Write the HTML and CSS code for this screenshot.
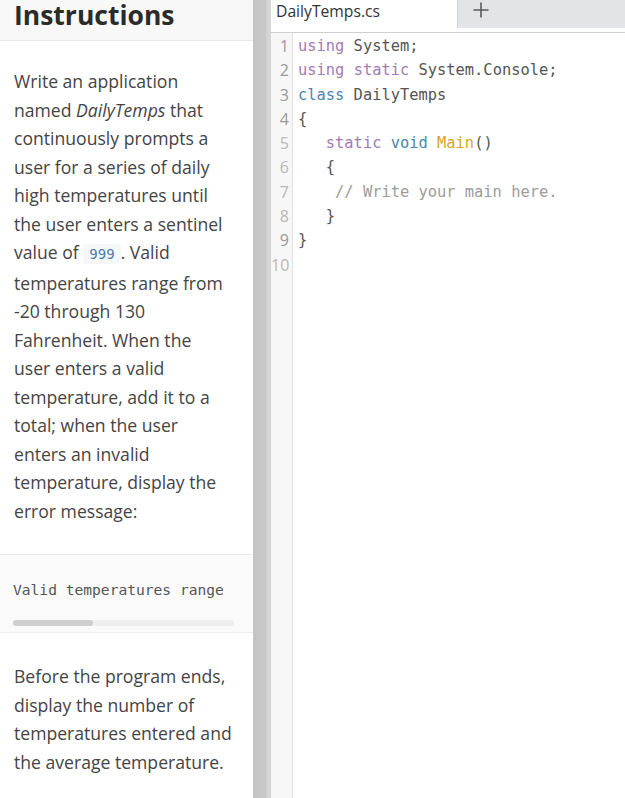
FILE: index.html
```html
<!DOCTYPE html>
<html>
<head>
<meta charset="utf-8">
<link rel="stylesheet" href="styles.css">
</head>
<body>
<div class="app">
  <aside class="instructions">
    <header class="ins-head"><h1>Instructions</h1></header>
    <div class="ins-body">
      <p>Write an application named <em>DailyTemps</em> that continuously prompts a user for a series of daily high temperatures until the user enters a sentinel value of <code class="inline">999</code>. Valid temperatures range from -20 through 130 Fahrenheit. When the <span class="nw">user enters</span> a valid temperature, add it to a total; when the user enters an invalid temperature, display the error message:</p>
      <div class="codeblock">
        <pre>Valid temperatures range</pre>
        <div class="hscroll"><div class="thumb"></div></div>
      </div>
      <p class="after">Before the program ends, display the number of temperatures entered and the average temperature.</p>
    </div>
  </aside>
  <div class="splitter"></div>
  <main class="editor">
    <div class="tabbar">
      <div class="tab">DailyTemps.cs</div>
      <div class="tab-add">
        <svg width="16" height="16" viewBox="0 0 16 16"><path d="M8 0.5V15.5M0.5 8H15.5" stroke="#5a5a5a" stroke-width="1.6" fill="none"/></svg>
      </div>
    </div>
    <div class="code">
      <div class="gutter">
        <div class="ln">1</div><div class="ln">2</div><div class="ln">3</div><div class="ln">4</div>
        <div class="ln lt">5</div><div class="ln lt">6</div><div class="ln lt">7</div><div class="ln lt">8</div>
        <div class="ln">9</div><div class="ln lt">10</div>
      </div>
      <div class="lines">
        <div class="line"><span class="kw">using</span> System;</div>
        <div class="line"><span class="kw">using</span> <span class="kw">static</span> System.Console;</div>
        <div class="line"><span class="ty">class</span> DailyTemps</div>
        <div class="line">{</div>
        <div class="line">   <span class="kw">static</span> <span class="ty">void</span> <span class="fn">Main</span>()</div>
        <div class="line">   {</div>
        <div class="line">    <span class="cm">// Write your main here.</span></div>
        <div class="line">   }</div>
        <div class="line">}</div>
        <div class="line"> </div>
      </div>
    </div>
  </main>
</div>
</body>
</html>
```

FILE: styles.css
```css
html, body {
  margin: 0;
  padding: 0;
  height: 100%;
  background: #fff;
}
.app {
  display: flex;
  height: 798px;
  overflow: hidden;
}
.instructions {
  width: 253px;
  flex: none;
  font-family: "Open Sans", sans-serif;
  color: #444;
  overflow: hidden;
}
.ins-head {
  height: 41px;
  box-sizing: border-box;
  background: #f8f8f8;
  border-bottom: 1px solid #e8e8e8;
  padding: 0 14px;
}
.ins-head h1 {
  margin: 0;
  font-size: 26.5px;
  font-weight: 700;
  color: #2b2b2b;
  line-height: 31px;
}
.ins-body p {
  margin: 0;
  padding: 26px 19px 0 14px;
  font-size: 17.6px;
  line-height: 28.5px;
}
.ins-body p.after { padding-top: 29px; }
.ins-body em { font-style: italic; }
.nw { white-space: nowrap; }
.inline {
  font-family: "DejaVu Sans Mono", monospace;
  font-size: 14px;
  color: #4a7ca8;
  background: #f6f7f8;
  padding: 2px 6px;
  border-radius: 3px;
}
.codeblock {
  margin-top: 29px;
  background: #fafafa;
  border-top: 1px solid #ececec;
  border-bottom: 1px solid #ececec;
  padding: 23px 19px 6px 13px;
}
.codeblock pre {
  margin: 0;
  font-family: "DejaVu Sans Mono", monospace;
  font-size: 14.6px;
  line-height: 24px;
  color: #555;
}
.hscroll {
  margin-top: 18px;
  height: 6px;
  background: #efefef;
  border-radius: 3px;
}
.thumb {
  width: 80px;
  height: 6px;
  background: #cfcfcf;
  border-radius: 3px;
}
.splitter {
  width: 18px;
  flex: none;
  background: linear-gradient(to right, #c4c4c4 0, #c9c9c9 13px, #d6d6d6 14px, #d6d6d6 18px);
}
.editor {
  flex: 1;
  display: flex;
  flex-direction: column;
  min-width: 0;
}
.tabbar {
  height: 32px;
  display: flex;
  border-bottom: 1px solid #cfcfcf;
  background: #fff;
}
.tab {
  width: 181px;
  padding-left: 5px;
  font-family: "Open Sans", sans-serif;
  font-size: 15.7px;
  color: #333;
  line-height: 22px;
  background: #fff;
}
.tab-add {
  flex: 1;
  height: 28px;
  background: #e2e4e7;
  border-left: 1px solid #d4d6d9;
  padding: 2px 0 0 15px;
  box-sizing: border-box;
}
.tab-add svg { display: block; }
.code {
  flex: 1;
  display: flex;
  padding-top: 1px;
}
.gutter {
  width: 18px;
  padding-right: 3px;
  background: #f7f7f7;
  border-right: 1px solid #e2e2e2;
  font-family: "Open Sans", sans-serif;
  font-size: 16px;
  text-align: right;
  color: #9a9a9a;
  margin-top: -1px;
  padding-top: 1px;
}
.ln {
  height: 24.3px;
  line-height: 24.3px;
}
.ln.lt { color: #b8b8b8; }
.lines {
  padding-left: 5px;
  font-family: "DejaVu Sans Mono", monospace;
  font-size: 15.4px;
  color: #555;
}
.line {
  height: 24.3px;
  line-height: 24.3px;
  white-space: pre;
}
.kw { color: #a27ab6; }
.ty { color: #4a86b0; }
.fn { color: #d4a72c; }
.cm { color: #9c9c9c; }
```
